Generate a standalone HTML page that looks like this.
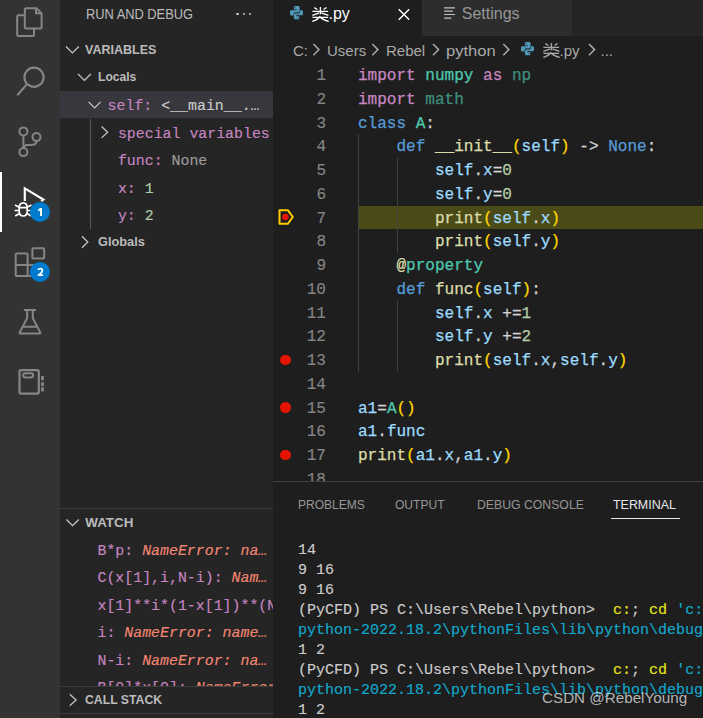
<!DOCTYPE html>
<html><head><meta charset="utf-8">
<style>
*{margin:0;padding:0;box-sizing:border-box}
html,body{width:703px;height:718px;overflow:hidden;background:#1e1e1e;font-family:"Liberation Sans",sans-serif;position:relative}
.a{position:absolute}
.t{position:absolute;white-space:pre;line-height:1}
#act{left:0;top:0;width:60px;height:718px;background:#333333}
#side{left:60px;top:0;width:213px;height:718px;background:#252526;overflow:hidden}
.hd{font-weight:bold;color:#bbbbbb;font-size:13.4px}
.mono{font-family:"Liberation Mono",monospace}
.dv{-webkit-text-stroke:0.15px;font-family:"Liberation Mono",monospace;font-size:14.9px}
.nm{color:#c586c0}
.vl{color:#cccccc}
.num{color:#b5cea8}
.gr{color:#9d9d9d}
.err{color:#f48771;font-style:italic}
.code{-webkit-text-stroke:0.25px;position:absolute;left:358px;font-family:"Liberation Mono",monospace;font-size:16.04px;line-height:23.75px;white-space:pre;color:#d4d4d4}
.lnum{-webkit-text-stroke:0.15px;position:absolute;left:290px;width:36px;text-align:right;font-family:"Liberation Mono",monospace;font-size:16.04px;line-height:23.75px;color:#858585}
.k{color:#c586c0}.b{color:#569cd6}.ty{color:#4ec9b0}.tyd{color:#3e8f7e}.f{color:#dcdcaa}.v{color:#9cdcfe}.n{color:#b5cea8}.br{color:#ffd700}
.term{-webkit-text-stroke:0.15px;position:absolute;left:298px;font-family:"Liberation Mono",monospace;font-size:15px;line-height:20px;white-space:pre;color:#cccccc}
.ty2{color:#e5e510}.cy{color:#11a8cd}
</style></head><body>
<svg width="0" height="0" style="position:absolute">
<defs>
<symbol id="lei" viewBox="0 0 17 15" overflow="visible"><g fill="none" stroke-width="1.35" stroke-linecap="butt">
<path d="M2.3 0.6L5.4 2.5M14.5 0.5L11.6 2.5M8.4 0V7.3M0.4 4.4H16.1M7.2 5.8L0.4 8.4M9.4 5.8L16.4 8.4M0.4 10.4H16.1M8.2 9.2Q6.2 12.6 0.3 14.4M8.6 10.6Q11 13 16.7 14.4"/>
</g></symbol>
<symbol id="py" viewBox="0 0 13.4 13.6" overflow="visible">
<path d="M5.2 0H8.2Q9.7 0 9.7 1.5V5.2Q9.7 6.4 8.5 6.4H5Q3.8 6.4 3.8 7.6V9.6H1.5Q0 9.6 0 8.1V5.6Q0 4.2 1.5 4.2H6.7V3.6H3.8V1.5Q3.8 0 5.2 0Z" fill="#519aba"/>
<path d="M5.2 0H8.2Q9.7 0 9.7 1.5V5.2Q9.7 6.4 8.5 6.4H5Q3.8 6.4 3.8 7.6V9.6H1.5Q0 9.6 0 8.1V5.6Q0 4.2 1.5 4.2H6.7V3.6H3.8V1.5Q3.8 0 5.2 0Z" fill="#519aba" stroke="#1e1e1e" stroke-width="0.5" transform="rotate(180 6.7 6.8)"/>
<circle cx="5.3" cy="1.8" r="0.55" fill="#1e1e1e"/><circle cx="8.1" cy="11.8" r="0.55" fill="#1e1e1e"/>
</symbol>
</defs></svg>
<!-- activity bar -->
<div id="act" class="a">
  <div class="a" style="left:0;top:172px;width:2px;height:60px;background:#ffffff"></div>
  <svg class="a" style="left:0;top:0" width="60" height="420" viewBox="0 0 60 420" fill="none" stroke="#858585" stroke-width="2">
    <!-- files -->
    <path d="M26.3 8.2H36.5L41.6 13.3V27Q41.6 28.5 40.1 28.5H26.3Q24.8 28.5 24.8 27V9.7Q24.8 8.2 26.3 8.2Z"/>
    <path d="M36 8.2V13.2H41.6"/>
    <path d="M24.8 15.3H18.7Q17.2 15.3 17.2 16.8V34.5Q17.2 36 18.7 36H32.5Q34 36 34 34.5V28.5"/>
    <!-- search -->
    <circle cx="34" cy="77.3" r="9.6" stroke-width="2.2"/>
    <path d="M26.6 84.6L17.3 95.3" stroke-width="2.2"/>
    <!-- scm -->
    <circle cx="23.4" cy="131.4" r="4"/>
    <circle cx="23.4" cy="152.1" r="4"/>
    <circle cx="36.5" cy="137.1" r="4"/>
    <path d="M23.4 135.4V148.1"/>
    <path d="M36.5 141.1Q36.5 145 31.5 145H27.5Q23.4 145 23.4 148.5"/>
    <!-- debug -->
    <g stroke="#ffffff">
      <path d="M24.8 201V188.4L43.4 199.6L41.2 201.2" stroke-width="2.2" stroke-linejoin="miter"/>
      <path d="M19.2 208.2Q19.2 202.9 23.2 202.9Q27.2 202.9 27.2 208.2V211Q27.2 216 23.2 216Q19.2 216 19.2 211Z" stroke-width="1.7"/>
      <path d="M19.2 207.7H27.2M15 205L19.2 207.3M27.2 207.3L31.4 205M14.6 210.5H19.2M27.2 210.5H31.6M15.2 216L19.4 213.5M27 213.5L31.2 216" stroke-width="1.7"/>
    </g>
    <!-- extensions -->
    <path d="M15.7 264.9V254.4Q15.7 253.4 16.7 253.4H26.6Q27.6 253.4 27.6 254.4V275.9H16.7Q15.7 275.9 15.7 274.9V264.9H38.9V275.9H27.6"/>
    <rect x="32.4" y="248.3" width="11.8" height="10.3" rx="1"/>
    <!-- beaker -->
    <path d="M23.9 310H36.1M27.1 310V318.2L19.6 332.6Q19.3 333.6 20.3 333.6H39.7Q40.7 333.6 40.3 332.6L32.8 318.2V310M23 326.7H37"/>
    <!-- notebook -->
    <rect x="19.5" y="370.1" width="19.3" height="23.5" rx="1.5" stroke-width="2.2"/>
    <rect x="23.2" y="373.2" width="10" height="4.3" rx="2.15" stroke-width="2"/>
    <path d="M42.5 376V380.2M42.5 382.2V386M42.5 387.3V391.6" stroke-width="2.8"/>
  </svg>
  <!-- badges -->
  <svg class="a" style="left:0;top:0" width="60" height="300">
    <circle cx="39.9" cy="211.9" r="10" fill="#007acc"/>
    <path d="M40.1 208H42V215.9H40.1V210.4L38 211.2V209.4Z" fill="#ffffff"/>
    <circle cx="39.9" cy="271.9" r="10" fill="#007acc"/>
    <path d="M38 269.9Q38.8 268.6 40.3 268.6Q42.3 268.6 42.3 270.6Q42.3 271.9 40.9 273.2L38.6 275.2" fill="none" stroke="#ffffff" stroke-width="1.8"/><path d="M37.8 275.1H43.1" fill="none" stroke="#ffffff" stroke-width="1.7"/>
  </svg>
</div>

<!-- sidebar -->
<div id="side" class="a">
  <div class="t" style="left:26px;top:6.9px;font-size:14.3px;color:#bbbbbb;transform:scaleX(0.898);transform-origin:0 0">RUN AND DEBUG</div>
  <div class="a" style="left:176.1px;top:12.8px;width:2.6px;height:2.6px;background:#c5c5c5;border-radius:1.3px"></div>
  <div class="a" style="left:182.5px;top:12.8px;width:2.6px;height:2.6px;background:#c5c5c5;border-radius:1.3px"></div>
  <div class="a" style="left:188.9px;top:12.8px;width:2.6px;height:2.6px;background:#c5c5c5;border-radius:1.3px"></div>
  <!-- VARIABLES -->
  <svg class="a" style="left:0;top:0" width="213" height="718" fill="none" stroke="#c5c5c5" stroke-width="1.3">
    <path d="M6 46.5L12.4 52.9L18.8 46.5"/>
    <path d="M18 74L24.4 80.4L30.8 74"/>
  </svg>
  <div class="t hd" style="left:25.3px;top:43px;transform:scaleX(0.935);transform-origin:0 0">VARIABLES</div>
  <div class="t hd" style="left:37.9px;top:69.8px;transform:scaleX(0.904);transform-origin:0 0">Locals</div>
  <div class="a" style="left:0;top:90.6px;width:213px;height:27.3px;background:#37373d"></div>
  <svg class="a" style="left:0;top:0" width="213" height="718" fill="none" stroke="#c5c5c5" stroke-width="1.3">
    <path d="M28.6 101.9L34.6 107.9L40.6 101.9"/>
    <path d="M41.6 126.5L47.6 132.2L41.6 137.9"/>
    <path d="M22 236.2L27.8 242L22 247.8"/>
    <path d="M6.4 519.5L12.6 525.6L18.8 519.5"/>
    <path d="M9.8 694.3L16.1 700L9.8 705.7"/>
  </svg>
  <div class="a" style="left:30px;top:118.5px;width:1px;height:110px;background:#585858"></div>
  <div class="t dv" style="left:47.6px;top:99.2px"><span class="nm">self: </span><span class="vl">&lt;__main__.…</span></div>
  <div class="t dv" style="left:57.9px;top:126.7px"><span class="nm">special variables</span></div>
  <div class="t dv" style="left:57.9px;top:154.2px"><span class="nm">func: </span><span class="gr">None</span></div>
  <div class="t dv" style="left:57.9px;top:181.7px"><span class="nm">x: </span><span class="num">1</span></div>
  <div class="t dv" style="left:57.9px;top:209.2px"><span class="nm">y: </span><span class="num">2</span></div>
  <div class="t hd" style="left:37.9px;top:234.5px;transform:scaleX(0.955);transform-origin:0 0">Globals</div>
  <!-- WATCH -->
  <div class="a" style="left:0;top:508px;width:213px;height:1px;background:#3c3c3c"></div>
  <div class="t hd" style="left:25.3px;top:516.2px">WATCH</div>
  <div class="a" style="left:0;top:535px;width:213px;height:151px;overflow:hidden">
    <div class="t dv" style="left:37.5px;top:8.95px"><span class="nm">B*p: </span><span class="err">NameError: na…</span></div>
    <div class="t dv" style="left:37.5px;top:36.45px"><span class="nm">C(x[1],i,N-i): </span><span class="err">Nam…</span></div>
    <div class="t dv" style="left:37.5px;top:63.95px"><span class="nm">x[1]**i*(1-x[1])**(N</span></div>
    <div class="t dv" style="left:37.5px;top:91.45px"><span class="nm">i: </span><span class="err">NameError: name…</span></div>
    <div class="t dv" style="left:37.5px;top:118.95px"><span class="nm">N-i: </span><span class="err">NameError: na…</span></div>
    <div class="t dv" style="left:37.5px;top:146.45px"><span class="nm">B[0]*x[0]: </span><span class="err">NameError: n…</span></div>
  </div>
  <!-- CALL STACK -->
  <div class="a" style="left:0;top:686px;width:213px;height:1px;background:#3c3c3c"></div>
  <div class="t hd" style="left:25.3px;top:692.8px;transform:scaleX(0.914);transform-origin:0 0">CALL STACK</div>
  <div class="a" style="left:0;top:713px;width:213px;height:1px;background:#3c3c3c"></div>
</div>

<!-- editor tabs -->
<div class="a" style="left:273px;top:0;width:430px;height:36px;background:#252526"></div>
<div class="a" style="left:273px;top:0;width:149px;height:36px;background:#1e1e1e"></div>
<div class="a" style="left:422px;top:0;width:150px;height:36px;background:#2d2d2d"></div>
<svg class="a" style="left:290.1px;top:6px" width="13.4" height="13.6"><use href="#py"/></svg>
<svg class="a" style="left:312px;top:7px;color:#fff" width="17" height="15"><use href="#lei" stroke="#ffffff"/></svg>
<div class="t" style="left:328.5px;top:6.2px;font-size:16px;color:#ffffff">.py</div>
<svg class="a" style="left:390px;top:0" width="30" height="30"><path d="M8.7 9.2L19.2 19.7M19.2 9.2L8.7 19.7" stroke="#ffffff" stroke-width="1.4"/></svg>
<div class="t" style="left:461.8px;top:6.35px;font-size:16px;color:#969696">Settings</div>
<svg class="a" style="left:273px;top:0" width="430" height="63" fill="none">
  <path d="M171.2 7.8H181.9M171.2 11.1H179.8M171.2 14.5H181.9M171.2 18.1H178.4" stroke="#c5c5c5" stroke-width="1.2"/>
</svg>

<!-- breadcrumbs -->
<div class="t" style="left:293px;top:43px;font-size:15px;color:#a9a9a9">C:</div>
<div class="t" style="left:327px;top:43px;font-size:15px;color:#a9a9a9">Users</div>
<div class="t" style="left:386px;top:43px;font-size:15px;color:#a9a9a9">Rebel</div>
<div class="t" style="left:445.6px;top:42.6px;font-size:15.5px;color:#a9a9a9;transform:scaleX(1.07);transform-origin:0 0">python</div>
<svg class="a" style="left:520.8px;top:42.2px" width="13.4" height="13.6"><use href="#py"/></svg>
<svg class="a" style="left:543px;top:43px" width="17" height="15"><use href="#lei" stroke="#a9a9a9"/></svg>
<div class="t" style="left:559.5px;top:43px;font-size:15px;color:#a9a9a9">.py</div>
<div class="t" style="left:600.5px;top:43px;font-size:15px;color:#a9a9a9">...</div>
<svg class="a" style="left:0;top:0" width="703" height="63" fill="none" stroke="#a9a9a9" stroke-width="1.5">
  <path d="M313.4 44L319 49.6L313.4 55.2"/>
  <path d="M372.3 44L377.9 49.6L372.3 55.2"/>
  <path d="M433 44L438.6 49.6L433 55.2"/>
  <path d="M503.3 44L508.9 49.6L503.3 55.2"/>
  <path d="M589 44L594.6 49.6L589 55.2"/>
</svg>

<!-- code -->
<div class="a" style="left:358px;top:205.5px;width:345px;height:23.75px;background:#4b4b18"></div>
<div class="a" style="left:358px;top:134.25px;width:1px;height:237.5px;background:#404040"></div>
<div class="a" style="left:396.5px;top:158px;width:1px;height:95px;background:#404040"></div>
<div class="a" style="left:396.5px;top:300.5px;width:1px;height:71.25px;background:#404040"></div>

<div class="lnum" style="top:65px">1</div>
<div class="lnum" style="top:88.75px">2</div>
<div class="lnum" style="top:112.5px">3</div>
<div class="lnum" style="top:136.25px">4</div>
<div class="lnum" style="top:160px">5</div>
<div class="lnum" style="top:183.75px">6</div>
<div class="lnum" style="top:207.5px">7</div>
<div class="lnum" style="top:231.25px">8</div>
<div class="lnum" style="top:255px">9</div>
<div class="lnum" style="top:278.75px">10</div>
<div class="lnum" style="top:302.5px">11</div>
<div class="lnum" style="top:326.25px">12</div>
<div class="lnum" style="top:350px">13</div>
<div class="lnum" style="top:373.75px">14</div>
<div class="lnum" style="top:397.5px">15</div>
<div class="lnum" style="top:421.25px">16</div>
<div class="lnum" style="top:445px">17</div>
<div class="lnum" style="top:468.75px">18</div>

<div class="code" style="top:65px"><span class="k">import</span> <span class="ty">numpy</span> <span class="k">as</span> <span class="tyd">np</span></div>
<div class="code" style="top:88.75px"><span class="k">import</span> <span class="tyd">math</span></div>
<div class="code" style="top:112.5px"><span class="b">class</span> <span class="ty">A</span>:</div>
<div class="code" style="top:136.25px">    <span class="b">def</span> <span class="f">__init__</span><span class="br">(</span><span class="v">self</span><span class="br">)</span> -&gt; <span class="b">None</span>:</div>
<div class="code" style="top:160px">        <span class="v">self</span>.<span class="v">x</span>=<span class="n">0</span></div>
<div class="code" style="top:183.75px">        <span class="v">self</span>.<span class="v">y</span>=<span class="n">0</span></div>
<div class="code" style="top:207.5px">        <span class="f">print</span><span class="br">(</span><span class="v">self</span>.<span class="v">x</span><span class="br">)</span></div>
<div class="code" style="top:231.25px">        <span class="f">print</span><span class="br">(</span><span class="v">self</span>.<span class="v">y</span><span class="br">)</span></div>
<div class="code" style="top:255px">    <span class="f">@</span><span class="ty">property</span></div>
<div class="code" style="top:278.75px">    <span class="b">def</span> <span class="f">func</span><span class="br">(</span><span class="v">self</span><span class="br">)</span>:</div>
<div class="code" style="top:302.5px">        <span class="v">self</span>.<span class="v">x</span> +=<span class="n">1</span></div>
<div class="code" style="top:326.25px">        <span class="v">self</span>.<span class="v">y</span> +=<span class="n">2</span></div>
<div class="code" style="top:350px">        <span class="f">print</span><span class="br">(</span><span class="v">self</span>.<span class="v">x</span>,<span class="v">self</span>.<span class="v">y</span><span class="br">)</span></div>
<div class="code" style="top:397.5px"><span class="v">a1</span>=<span class="ty">A</span><span class="br">()</span></div>
<div class="code" style="top:421.25px"><span class="v">a1</span>.<span class="v">func</span></div>
<div class="code" style="top:445px"><span class="f">print</span><span class="br">(</span><span class="v">a1</span>.<span class="v">x</span>,<span class="v">a1</span>.<span class="v">y</span><span class="br">)</span></div>

<!-- breakpoints -->
<div class="a" style="left:280px;top:354.5px;width:10.8px;height:10.8px;border-radius:50%;background:#e51400"></div>
<div class="a" style="left:280px;top:402px;width:10.8px;height:10.8px;border-radius:50%;background:#e51400"></div>
<div class="a" style="left:280px;top:449.5px;width:10.8px;height:10.8px;border-radius:50%;background:#e51400"></div>
<svg class="a" style="left:273px;top:200px" width="30" height="30">
  <path d="M6.5 10.2H14.8L19.8 17L14.8 23.8H6.5Z" fill="none" stroke="#ffcc00" stroke-width="2" stroke-linejoin="round"/>
  <circle cx="12.4" cy="17" r="3.3" fill="#e51400"/>
</svg>

<!-- panel -->
<div class="a" style="left:273px;top:481px;width:430px;height:237px;background:#1e1e1e;border-top:1px solid #414141"></div>
<div class="t" style="left:298px;top:498px;font-size:13.4px;color:#969696;transform:scaleX(0.899);transform-origin:0 0">PROBLEMS</div>
<div class="t" style="left:395px;top:498px;font-size:13.4px;color:#969696;transform:scaleX(0.9);transform-origin:0 0">OUTPUT</div>
<div class="t" style="left:476.6px;top:498px;font-size:13.4px;color:#969696;transform:scaleX(0.915);transform-origin:0 0">DEBUG CONSOLE</div>
<div class="t" style="left:613px;top:498px;font-size:13.4px;color:#e7e7e7;transform:scaleX(0.928);transform-origin:0 0">TERMINAL</div>
<div class="a" style="left:611px;top:518px;width:69px;height:1.3px;background:#e7e7e7"></div>

<div class="term" style="top:541px">14</div>
<div class="term" style="top:561px">9 16</div>
<div class="term" style="top:581px">9 16</div>
<div class="term" style="top:601px">(PyCFD) PS C:\Users\Rebel\python&gt;  <span class="ty2">c:</span>; <span class="ty2">cd</span> <span class="cy">'c:</span></div>
<div class="term cy" style="top:621px">python-2022.18.2\pythonFiles\lib\python\debugpy</div>
<div class="term" style="top:641px">1 2</div>
<div class="term" style="top:661px">(PyCFD) PS C:\Users\Rebel\python&gt;  <span class="ty2">c:</span>; <span class="ty2">cd</span> <span class="cy">'c:</span></div>
<div class="term cy" style="top:681px">python-2022.18.2\pythonFiles\lib\python\debugpy</div>
<div class="term" style="top:701px">1 2</div>

<div class="t" style="left:542px;top:690.4px;font-size:15px;color:rgba(220,220,220,0.8);transform:scaleX(1.014);transform-origin:0 0">CSDN @RebelYoung</div>
</body></html>
